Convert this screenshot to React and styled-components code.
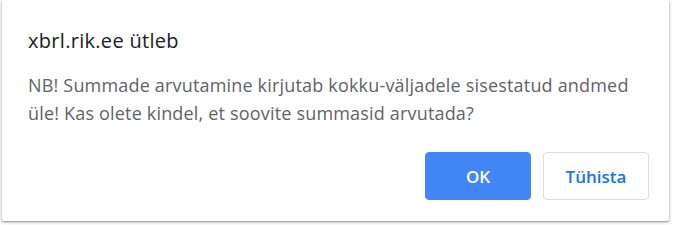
import React from "react";
import styled, { createGlobalStyle } from "styled-components";

const GlobalStyle = createGlobalStyle`
  html, body {
    margin: 0;
    padding: 0;
    background: #ffffff;
  }
  body {
    font-family: "Open Sans", "Noto Sans", Arial, sans-serif;
    overflow: hidden;
  }
`;

const Page = styled.div`
  width: 676px;
  height: 225px;
  display: flex;
  align-items: flex-start;
  background: #ffffff;
`;

const Dialog = styled.div`
  margin-left: 2px;
  width: 667px;
  height: 221px;
  box-sizing: border-box;
  padding: 29px 20px 0 26px;
  background: #ffffff;
  border-radius: 0 0 2px 2px;
  box-shadow: 0 1px 2px rgba(0, 0, 0, 0.35), 0 1px 4px rgba(0, 0, 0, 0.2);
  display: flex;
  flex-direction: column;
`;

const Title = styled.div`
  font-size: 20px;
  letter-spacing: 0.3px;
  line-height: 24px;
  color: #202124;
`;

const Message = styled.div`
  margin-top: 18px;
  font-size: 18px;
  letter-spacing: 0.18px;
  line-height: 28px;
  color: #5f6368;
  width: 610px;
`;

const Actions = styled.div`
  margin-top: 25px;
  display: flex;
  justify-content: flex-end;
  gap: 12px;
`;

const Button = styled.button`
  width: 106px;
  height: 48px;
  border-radius: 4px;
  font-family: "Open Sans", "Noto Sans", Arial, sans-serif;
  font-size: 17px;
  font-weight: 600;
  cursor: pointer;
  border: 1px solid ${(p) => (p.$primary ? "#4285f4" : "#dadce0")};
  background: ${(p) => (p.$primary ? "#4285f4" : "#ffffff")};
  color: ${(p) => (p.$primary ? "#ffffff" : "#1a73e8")};
`;

export default function App() {
  return (
    <Page>
      <GlobalStyle />
      <Dialog>
        <Title>xbrl.rik.ee ütleb</Title>
        <Message>
          NB! Summade arvutamine kirjutab kokku-väljadele sisestatud andmed
          üle! Kas olete kindel, et soovite summasid arvutada?
        </Message>
        <Actions>
          <Button $primary>OK</Button>
          <Button>Tühista</Button>
        </Actions>
      </Dialog>
    </Page>
  );
}
